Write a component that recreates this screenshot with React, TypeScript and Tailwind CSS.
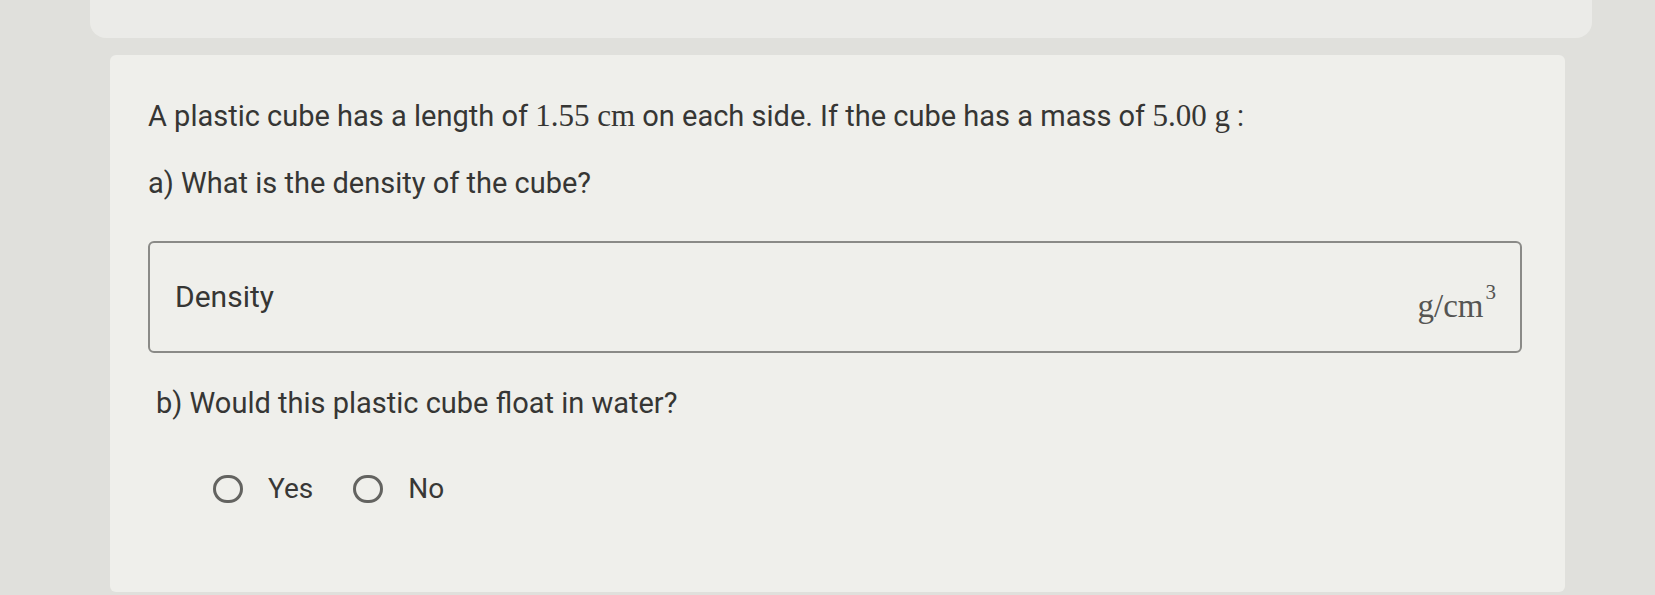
import React from 'react';

const OPTIONS = ['Yes', 'No'];

function Radio({ label }: { label: string }) {
  return (
    <label className="flex items-center gap-[25px] mr-[40px] cursor-pointer">
      <span className="w-[30px] h-[28px] rounded-full border-[3px] border-[#636360] bg-transparent" />
      <span className="text-[28px] leading-[36px] text-[#383836]">{label}</span>
    </label>
  );
}

export default function App() {
  return (
    <div className="w-[1655px] h-[595px] overflow-hidden bg-[#e0e0dc] font-['Roboto',sans-serif]">
      {/* card above, mostly scrolled off */}
      <div className="ml-[90px] w-[1502px] h-[38px] rounded-b-[16px] bg-[#ebebe8]" />

      <div className="mt-[17px] ml-[110px] w-[1455px] h-[537px] rounded-[6px] bg-[#efefeb] pl-[38px] pr-[43px] pt-[43px]">
        <p className="text-[29px] leading-[36px] text-[#363634] whitespace-nowrap">
          A plastic cube has a length of{' '}
          <span className="font-['Liberation_Serif',serif] text-[31px]">1.55&nbsp;cm</span> on each side. If the
          cube has a mass of <span className="font-['Liberation_Serif',serif] text-[31px]">5.00&nbsp;g</span> :
        </p>

        <p className="mt-[31px] text-[29px] leading-[36px] text-[#363634]">a) What is the density of the cube?</p>

        <div className="mt-[40px] h-[112px] flex items-center justify-between rounded-[6px] border-2 border-[#8a8a87] pl-[25px] pr-[24px]">
          <span className="text-[30px] leading-[36px] text-[#363634]">Density</span>
          <span className="mt-[18px] font-['Liberation_Serif',serif] text-[33px] leading-[36px] text-[#555553] whitespace-nowrap">
            g/cm<span className="inline-block align-top -translate-y-[14px] ml-[2px] text-[21px]">3</span>
          </span>
        </div>

        <p className="mt-[32px] pl-[8px] text-[29px] leading-[36px] text-[#363634]">
          b) Would this plastic cube float in water?
        </p>

        <div className="mt-[50px] ml-[65px] flex items-center">
          {OPTIONS.map((o) => (
            <Radio key={o} label={o} />
          ))}
        </div>
      </div>
    </div>
  );
}
